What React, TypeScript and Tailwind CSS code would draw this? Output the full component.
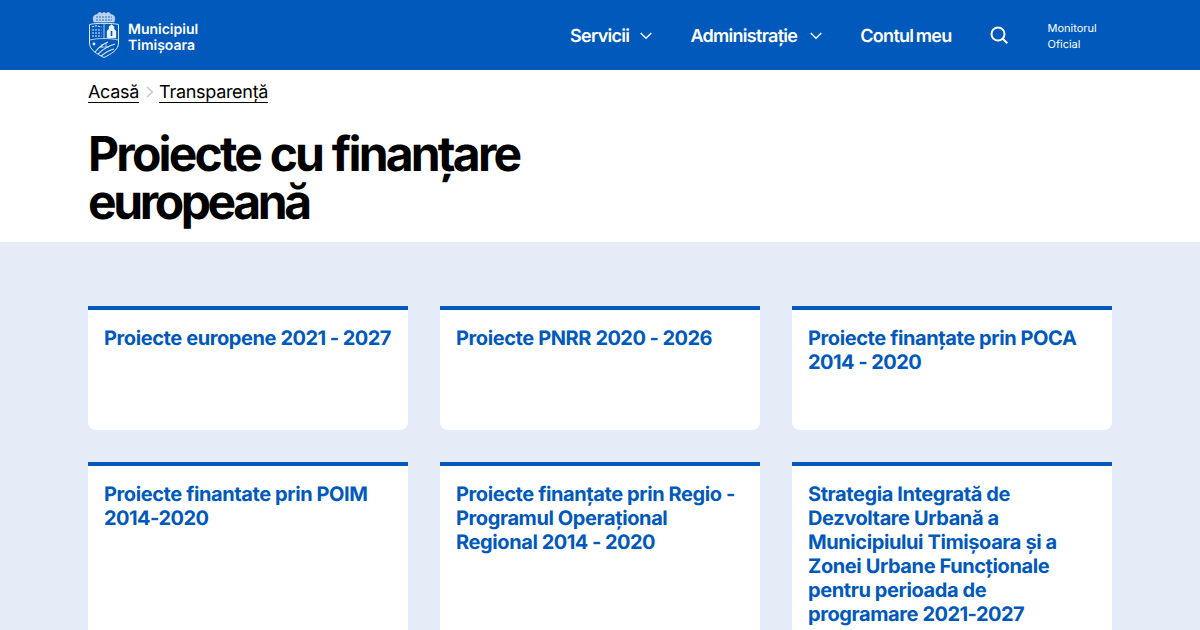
const cards: string[] = [
  "Proiecte europene 2021 - 2027",
  "Proiecte PNRR 2020 - 2026",
  "Proiecte finanțate prin POCA 2014 - 2020",
  "Proiecte finantate prin POIM 2014-2020",
  "Proiecte finanțate prin Regio - Programul Operațional Regional 2014 - 2020",
  "Strategia Integrată de Dezvoltare Urbană a Municipiului Timișoara și a Zonei Urbane Funcționale pentru perioada de programare 2021-2027",
];

function Crest() {
  return (
    <svg width="32" height="48" viewBox="0 0 32 48" fill="none" stroke="#dfe9f7" strokeWidth="0.8">
      <path d="M6 11 C4 7 6 3 9 4 C10 1 13 1 14 3 C15 1 17 1 18 3 C19 1 22 1 23 4 C26 3 28 7 26 11 Z" fill="#b9cfec" strokeWidth="0.5" />
      <path d="M8 6h16M8 9h16" stroke="#0059bb" strokeWidth="0.8" strokeDasharray="2 1" />
      <path d="M1.5 13.5 C6 12 26 12 30.5 13.5 V32 C30.5 39 23 43 16 46.5 C9 43 1.5 39 1.5 32 Z" strokeWidth="1" />
      <path d="M2 29 C10 27 22 27 30 29 M16 13 V28" strokeWidth="0.8" />
      <path d="M4 16 C7 14 11 15 13.5 16 M4 19h9.5M4 22h9.5M4 25h9.5" strokeWidth="1.1" strokeDasharray="2 1" />
      <path d="M19 27 V20 L21 18 V15.5 L23.5 13.5 L26 15.5 V18 L28 20 V27 Z" fill="#eef4fb" strokeWidth="0.4" />
      <path d="M22.7 20h1.6v5h-1.6z" fill="#0059bb" stroke="none" />
      <circle cx="6" cy="33" r="1.4" fill="#eef4fb" stroke="none" />
      <path d="M7 41 C11 36 15 33 20 31 M10 43 C15 38 20 35 27 33 M13 45 C18 41 22 39 26 38" strokeWidth="1.1" />
      <path d="M12 36 h9 M14 33v4 M18 32v4" strokeWidth="0.7" />
    </svg>
  );
}

function Chevron({ className }: { className: string }) {
  return (
    <svg width="12" height="8" viewBox="0 0 12 8" fill="none" stroke="#fff" strokeWidth="1.4" className={className}>
      <path d="M0.7 1 L6 6.2 L11.3 1" />
    </svg>
  );
}

function CardTitle({ text }: { text: string }) {
  const parts = text.split(/(\d[\d\s-]*\d)/);
  return (
    <div className="text-[20px] leading-[24px] font-bold tracking-[-0.4px] text-[#0059bb]">
      {parts.map((p, i) =>
        i % 2 === 1 ? (
          <span key={i} className="tracking-[-0.55px]">
            {p}
          </span>
        ) : (
          <span key={i}>{p}</span>
        ),
      )}
    </div>
  );
}

export default function App() {
  return (
    <div className="h-[630px] w-[1200px] overflow-hidden bg-[#e6ecf7] font-['Inter',sans-serif] [text-rendering:geometricPrecision]">
      <header className="flex h-[70px] items-center bg-[#0059bb] pl-[88px] text-white">
        <div className="flex w-[482px] items-center gap-[8px]">
          <Crest />
          <div className="pt-[6px] text-[14px] leading-[16px] font-semibold">
            Municipiul
            <br />
            Timișoara
          </div>
        </div>
        <nav className="flex items-center pt-[4px] text-[18px] leading-[24px] font-semibold tracking-[-0.7px] [word-spacing:-1.5px]">
          <span>Servicii</span>
          <Chevron className="mb-[2px] ml-[11px]" />
          <span className="ml-[38px]">Administrație</span>
          <Chevron className="mb-[2px] ml-[13px]" />
          <span className="ml-[38px]">Contul meu</span>
          <svg width="18" height="18" viewBox="0 0 18 18" fill="none" stroke="#fff" strokeWidth="2" className="mb-[4px] ml-[39px]">
            <circle cx="8" cy="8" r="6.5" />
            <path d="M12.5 12.5 L17.3 17.3" />
          </svg>
          <div className="mb-[2px] ml-[39px] text-[11px] leading-[16px] font-normal tracking-normal [word-spacing:0]">
            Monitorul
            <br />
            Oficial
          </div>
        </nav>
      </header>
      <section className="h-[172px] bg-white px-[88px]">
        <div className="flex items-center pt-[13px] text-[18px] leading-[24px] tracking-[-0.3px] text-black">
          <span className="border-b border-black leading-[19px]">Acasă</span>
          <svg width="8" height="12" viewBox="0 0 8 12" fill="none" stroke="#c4c4c4" strokeWidth="1.2" className="mr-[5px] mb-[2px] ml-[7px]">
            <path d="M1 1 L6.5 6 L1 11" />
          </svg>
          <span className="border-b border-black leading-[19px]">Transparență</span>
        </div>
        <h1 className="mt-[27px] w-[560px] text-[48px] leading-[48px] font-bold tracking-[-2.8px] [word-spacing:1px] text-black">
          Proiecte cu finanțare <span className="tracking-[-3.4px]">europeană</span>
        </h1>
      </section>
      <main className="grid grid-cols-3 gap-x-[32px] gap-y-[32px] px-[88px] pt-[64px]">
        {cards.map((c) => (
          <div key={c} className="min-h-[124px] rounded-b-[8px] border-t-4 border-[#0059bb] bg-white px-[16px] pt-[16px] pb-[16px]">
            <CardTitle text={c} />
          </div>
        ))}
      </main>
    </div>
  );
}
